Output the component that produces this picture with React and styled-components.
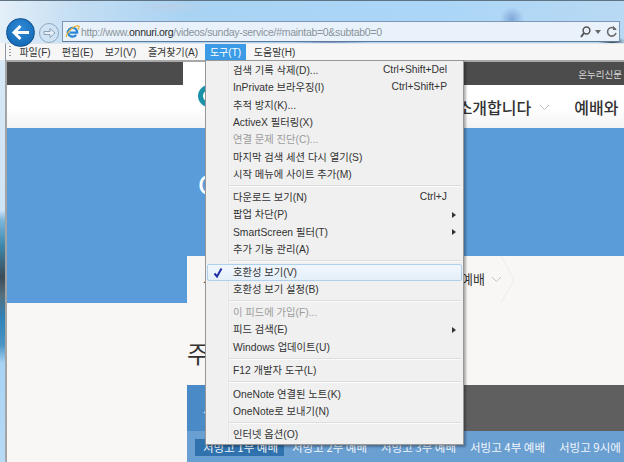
import React from "react";
import styled, { createGlobalStyle } from "styled-components";

const KR = `"Noto Sans CJK KR", "Noto Sans", sans-serif`;
const UI = `"Liberation Sans", "Noto Sans CJK KR", sans-serif`;

const Global = createGlobalStyle`
  html, body { margin: 0; padding: 0; background: #f8f7f5; }
  * { box-sizing: border-box; }
`;

const Screen = styled.div`
  position: relative;
  width: 624px;
  height: 462px;
  overflow: hidden;
  font-family: ${KR};
  background: #f8f7f5;
`;

const Chrome = styled.header`
  height: 43px;
  padding: 21px 4px 0 6px;
  display: flex;
  align-items: center;
  gap: 3px;
  border-top: 1px solid #5f7382;
  background:
    radial-gradient(ellipse 14px 6px at 612px 41px, #3d4650 0, rgba(61,70,80,0) 100%),
    radial-gradient(circle at 512px 18px, #7fa8d8 0, rgba(127,168,216,0) 12px),
    radial-gradient(ellipse 40px 6px at 170px 6px, #b9d0e8 0, rgba(185,208,232,0) 100%),
    radial-gradient(ellipse 40px 8px at 330px 40px, #7e8fc0 0, rgba(126,143,192,0) 100%),
    linear-gradient(90deg, #e4eff8 0, #c4def3 12%, #a9d3f3 30%, #abd6f7 70%, #b8d9f3 100%);
`;

const BackButton = styled.div`
  width: 29px;
  height: 29px;
  flex: none;
  margin-top: -1px;
  border-radius: 50%;
  background: radial-gradient(circle at 50% 35%, #2f8ad6, #0f62ad);
  border: 1px solid #0d4f8f;
  display: grid;
  place-items: center;
`;

const ForwardButton = styled.div`
  width: 20px;
  height: 20px;
  flex: none;
  margin-left: 1px;
  border-radius: 50%;
  background: #cfe3f4;
  border: 1px solid #8fa8c2;
  display: grid;
  place-items: center;
`;

const AddressBar = styled.div`
  flex: 1;
  height: 21px;
  margin-top: -2px;
  display: flex;
  align-items: center;
  gap: 1px;
  padding: 0 1px 0 2px;
  background: #e9f2fa;
  border: 1px solid #7c97b5;
  border-bottom-color: #5f7a96;
`;

const Url = styled.span`
  flex: 1;
  font: 10.5px "Liberation Sans", sans-serif;
  letter-spacing: -0.3px;
  color: #8a929a;
  white-space: nowrap;
`;

const Domain = styled.span`
  color: #2c2c2c;
`;

const AddressIcons = styled.div`
  display: flex;
  align-items: center;
  gap: 4px;
  color: #555;
`;

const MenuBar = styled.nav`
  height: 17px;
  margin-left: 5px;
  display: flex;
  align-items: stretch;
  background: #f6f6f6;
  border-left: 1px solid #8b98a5;
  border-top: 1px solid #dfe6ec;
  font-family: ${UI};
  font-size: 10px;
  color: #333;
`;

const Grip = styled.span`
  width: 2px;
  margin: 2px 4px 2px 3px;
  background: repeating-linear-gradient(180deg, #9a9a9a 0 1px, transparent 1px 3px);
`;

const MenuTitle = styled.span`
  display: flex;
  align-items: center;
  justify-content: center;
  width: ${(p) => p.$w}px;
  padding-bottom: 2px;
  white-space: nowrap;
  color: ${(p) => (p.$active ? "#fff" : "#333")};
  background: ${(p) => (p.$active ? "#3c9be6" : "transparent")};
`;

const Body = styled.div`
  display: flex;
  height: 402px;
`;

const FrameEdge = styled.div`
  width: 7px;
  flex: none;
  border-right: 2px solid #a4a4a4;
  background: linear-gradient(180deg,
    #d7e9f7 0, #cfe4f6 150px, #7eb7dc 160px, #3f89ad 185px, #3b4b55 217px, #55707f 235px,
    #2f82b8 257px, #4a94c6 285px, #a8d3f5 303px, #b8daf5 100%);
`;

const Page = styled.main`
  flex: 1;
  min-width: 0;
  overflow: hidden;
  border-top: 2px solid #a8a8a8;
`;

const TopStrip = styled.div`
  display: flex;
  height: 23px;
  background: #fff;
`;

const DarkLeft = styled.div`
  width: 176px;
  background: #4c4c4c;
`;

const DarkRight = styled.div`
  margin-left: auto;
  width: 200px;
  padding-right: 2px;
  display: flex;
  align-items: center;
  justify-content: flex-end;
  background: #4c4c4c;
  color: #d8d8d8;
  font-size: 9.5px;
  white-space: nowrap;
`;

const SiteHeader = styled.div`
  height: 43px;
  padding: 0 2px 0 191px;
  display: flex;
  align-items: center;
  background: linear-gradient(180deg, #fff 55%, #f3f3f3 100%);
`;

const LogoMark = styled.div`
  width: 22px;
  height: 22px;
  margin-top: -22px;
  flex: none;
  border-radius: 50%;
  border: 5px solid #1a93a8;
`;

const Nav = styled.div`
  margin-left: auto;
  display: flex;
  align-items: center;
  font-size: 16px;
  font-weight: 500;
  color: #333;
  white-space: nowrap;
`;

const Chevron = styled.svg`
  flex: none;
  margin: ${(p) => p.$margin};
  color: #c4c4c4;
`;

const Hero = styled.section`
  height: 175px;
  padding-left: 180px;
  display: flex;
  flex-direction: column;
  background: #5a9cd9;
`;

const HeroTitle = styled.div`
  margin: 40px 0 0 11px;
  height: 88px;
  color: #fff;
  font: 30px/34px "Liberation Sans", sans-serif;
`;

const Crumbs = styled.div`
  position: relative;
  flex: 1;
  padding: 0 122px 2px 16px;
  display: flex;
  align-items: center;
  background: #f8f7f5;
  font-size: 13px;
  color: #333;
  white-space: nowrap;
`;

const CrumbLabel = styled.span`
  display: inline-block;
`;

const CrumbCurrent = styled.span`
  margin-left: auto;
  display: flex;
  align-items: center;
`;

const CrumbArrow = styled.svg`
  position: absolute;
  left: 313px;
  top: 0;
`;

const Content = styled.section`
  padding: 37px 0 0 180px;
`;

const Title = styled.h1`
  margin: 0 0 19px;
  height: 26px;
  font-size: 24px;
  line-height: 26px;
  font-weight: 400;
  color: #333;
  white-space: nowrap;
`;

const Schedule = styled.div`
  display: flex;
  height: 46px;
  background: #5f5f5f;
`;

const ScheduleHead = styled.div`
  width: 277px;
  padding-left: 16px;
  display: flex;
  align-items: center;
  background: #4a8ac6;
  color: #fff;
  font-size: 13px;
`;

const Tabs = styled.div`
  height: 31px;
  padding: 8px 0 0 8px;
  display: flex;
  background: #6a9fd2;
`;

const Tab = styled.span`
  width: 89px;
  height: 17px;
  flex: none;
  display: flex;
  align-items: center;
  padding-left: 8px;
  font-size: 11.5px;
  line-height: 17px;
  white-space: nowrap;
  color: #f2f6fb;
  background: ${(p) => (p.$active ? "#2f72ae" : "transparent")};
`;

const Dropdown = styled.div`
  position: absolute;
  left: 205px;
  top: 60px;
  width: 259px;
  height: 385px;
  padding-top: 1px;
  background: linear-gradient(90deg, #f0f0f0 0 22px, #e6e6e6 22px 23px, #f4f4f4 23px 24px, #f0f0f0 24px);
  border: 1px solid #979797;
  box-shadow: 2px 2px 2px rgba(0, 0, 0, 0.3);
  font-family: ${UI};
  font-size: 10.3px;
`;

const Row = styled.div`
  position: relative;
  height: 17.3px;
  display: flex;
  align-items: center;
  padding: 0 16px 2px 27px;
  white-space: nowrap;
  color: ${(p) => (p.$disabled ? "#9c9c9c" : "#333")};
  ${(p) =>
    p.$on &&
    `
    margin: 0 1px;
    padding-left: 25px;
    padding-right: 15px;
    border: 1px solid #add0ee;
    border-radius: 2px;
    background: linear-gradient(180deg, #f1f7fd, #e4eff9);
  `}
`;

const Shortcut = styled.span`
  margin-left: auto;
`;

const SubArrow = styled.span`
  position: absolute;
  right: 7px;
  top: 50%;
  margin-top: -3px;
  border-left: 4px solid #333;
  border-top: 3px solid transparent;
  border-bottom: 3px solid transparent;
`;

const Check = styled.svg`
  position: absolute;
  left: 4px;
  top: 2px;
`;

const Sep = styled.div`
  height: ${(p) => p.$h}px;
  margin-left: 23px;
  margin-right: 2px;
  display: flex;
  align-items: center;
  &::before {
    content: "";
    flex: 1;
    height: 2px;
    background: linear-gradient(180deg, #dcdcdc 50%, #fbfbfb 50%);
  }
`;

const groups = [
  {
    h: 5.8,
    rows: [
      { t: "검색 기록 삭제(D)...", s: "Ctrl+Shift+Del" },
      { t: "InPrivate 브라우징(I)", s: "Ctrl+Shift+P" },
      { t: "추적 방지(K)..." },
      { t: "ActiveX 필터링(X)" },
      { t: "연결 문제 진단(C)...", d: true },
      { t: "마지막 검색 세션 다시 열기(S)" },
      { t: "시작 메뉴에 사이트 추가(M)" },
    ],
  },
  {
    h: 5.8,
    rows: [
      { t: "다운로드 보기(N)", s: "Ctrl+J" },
      { t: "팝업 차단(P)", a: true },
      { t: "SmartScreen 필터(T)", a: true },
      { t: "추가 기능 관리(A)" },
    ],
  },
  {
    h: 5.6,
    rows: [{ t: "호환성 보기(V)", on: true }, { t: "호환성 보기 설정(B)" }],
  },
  {
    h: 5.8,
    rows: [
      { t: "이 피드에 가입(F)...", d: true },
      { t: "피드 검색(E)", a: true },
      { t: "Windows 업데이트(U)" },
    ],
  },
  { h: 6.7, rows: [{ t: "F12 개발자 도구(L)" }] },
  {
    h: 5.6,
    rows: [{ t: "OneNote 연결된 노트(K)" }, { t: "OneNote로 보내기(N)" }],
  },
  { rows: [{ t: "인터넷 옵션(O)" }] },
];

const menuTitles = [
  ["파일(F)", 40],
  ["편집(E)", 45],
  ["보기(V)", 41],
  ["즐겨찾기(A)", 64],
  ["도구(T)", 41, true],
  ["도움말(H)", 57],
];

const tabs = ["서빙고 1부 예배", "서빙고 2부 예배", "서빙고 3부 예배", "서빙고 4부 예배", "서빙고 9시에 모이는"];

const IeLogo = () => (
  <svg width="15" height="15" viewBox="0 0 17 17" fill="none">
    <path d="M3 10.5C3 7 5.6 4.5 8.7 4.5s5 2.3 5 5.2H5.2M12.6 12.3c-1 1.3-2.4 2-3.9 2-2.7 0-4.6-1.6-5.3-3.8" stroke="#2b86d6" strokeWidth="2.6" />
    <path d="M2 14.6C.6 12.5 5.5 5.8 10 3.4c3-1.6 5.6-1.8 6-.6.3 1-.7 2.5-1.6 3.5" stroke="#e6b12a" strokeWidth="1.4" />
  </svg>
);

export default function App() {
  return (
    <Screen>
      <Global />
      <Chrome>
        <BackButton>
          <svg width="19" height="17" viewBox="0 0 19 17" fill="none" stroke="#fff" strokeWidth="3" strokeLinejoin="miter">
            <path d="M18 8.5H3.5M9.5 2L3 8.5 9.5 15" />
          </svg>
        </BackButton>
        <ForwardButton>
          <svg width="13" height="12" viewBox="0 0 13 12" fill="#e6eff7" stroke="#8aa0b6">
            <path d="M1 4.5h6V1.5L12 6 7 10.5v-3H1z" />
          </svg>
        </ForwardButton>
        <AddressBar>
          <IeLogo />
          <Url>
            http://www.<Domain>onnuri.org</Domain>/videos/sunday-service/#maintab=0&amp;subtab0=0
          </Url>
          <AddressIcons>
            <svg width="11" height="12" viewBox="0 0 11 12" fill="none" stroke="#555" strokeWidth="1.5">
              <circle cx="6.5" cy="4.5" r="3.4" />
              <path d="M4 7L1 11" strokeWidth="2" />
            </svg>
            <svg width="6" height="4" viewBox="0 0 6 4" fill="#666">
              <path d="M0 0h6L3 4z" />
            </svg>
            <svg width="13" height="13" viewBox="0 0 13 13" fill="none" stroke="#666" strokeWidth="1.5">
              <path d="M10.5 4.5A4.3 4.3 0 1 0 11 8" />
              <path d="M8 .8V5h3.8z" fill="#666" stroke="none" />
            </svg>
          </AddressIcons>
        </AddressBar>
      </Chrome>
      <MenuBar>
        <Grip />
        {menuTitles.map(([t, w, active]) => (
          <MenuTitle key={t} $w={w} $active={active}>
            {t}
          </MenuTitle>
        ))}
      </MenuBar>
      <Body>
        <FrameEdge />
        <Page>
          <TopStrip>
            <DarkLeft />
            <DarkRight>온누리신문</DarkRight>
          </TopStrip>
          <SiteHeader>
            <LogoMark />
            <Nav>
              소개합니다
              <Chevron $margin="2px 24px 0 8px" width="11" height="7" viewBox="0 0 11 7" fill="none" stroke="currentColor">
                <path d="M1 1l4.5 4.5L10 1" />
              </Chevron>
              예배와&nbsp;
            </Nav>
          </SiteHeader>
          <Hero>
            <HeroTitle>O</HeroTitle>
            <Crumbs>
              <CrumbLabel>시</CrumbLabel>
              <CrumbCurrent>
                주일 예배
                <Chevron $margin="1px 0 0 6px" width="11" height="7" viewBox="0 0 11 7" fill="none" stroke="currentColor">
                  <path d="M1 1l4.5 4.5L10 1" />
                </Chevron>
              </CrumbCurrent>
              <CrumbArrow width="16" height="47" viewBox="0 0 16 47" fill="none" stroke="#ececea">
                <path d="M1 0l13 24L1 47" />
              </CrumbArrow>
            </Crumbs>
          </Hero>
          <Content>
            <Title>주일 예배</Title>
            <Schedule>
              <ScheduleHead>시</ScheduleHead>
            </Schedule>
            <Tabs>
              {tabs.map((t, i) => (
                <Tab key={t} $active={i === 0}>
                  {t}
                </Tab>
              ))}
            </Tabs>
          </Content>
        </Page>
      </Body>
      <Dropdown>
        {groups.map((g, gi) => (
          <React.Fragment key={gi}>
            {g.rows.map((r) => (
              <Row key={r.t} $disabled={r.d} $on={r.on}>
                {r.on && (
                  <Check width="12" height="12" viewBox="0 0 12 12" fill="none" stroke="#1f2fa8" strokeWidth="2">
                    <path d="M2.5 6.5l2.5 3L9.5 1.5" />
                  </Check>
                )}
                {r.t}
                {r.s && <Shortcut>{r.s}</Shortcut>}
                {r.a && <SubArrow />}
              </Row>
            ))}
            {g.h && <Sep $h={g.h} />}
          </React.Fragment>
        ))}
      </Dropdown>
    </Screen>
  );
}
